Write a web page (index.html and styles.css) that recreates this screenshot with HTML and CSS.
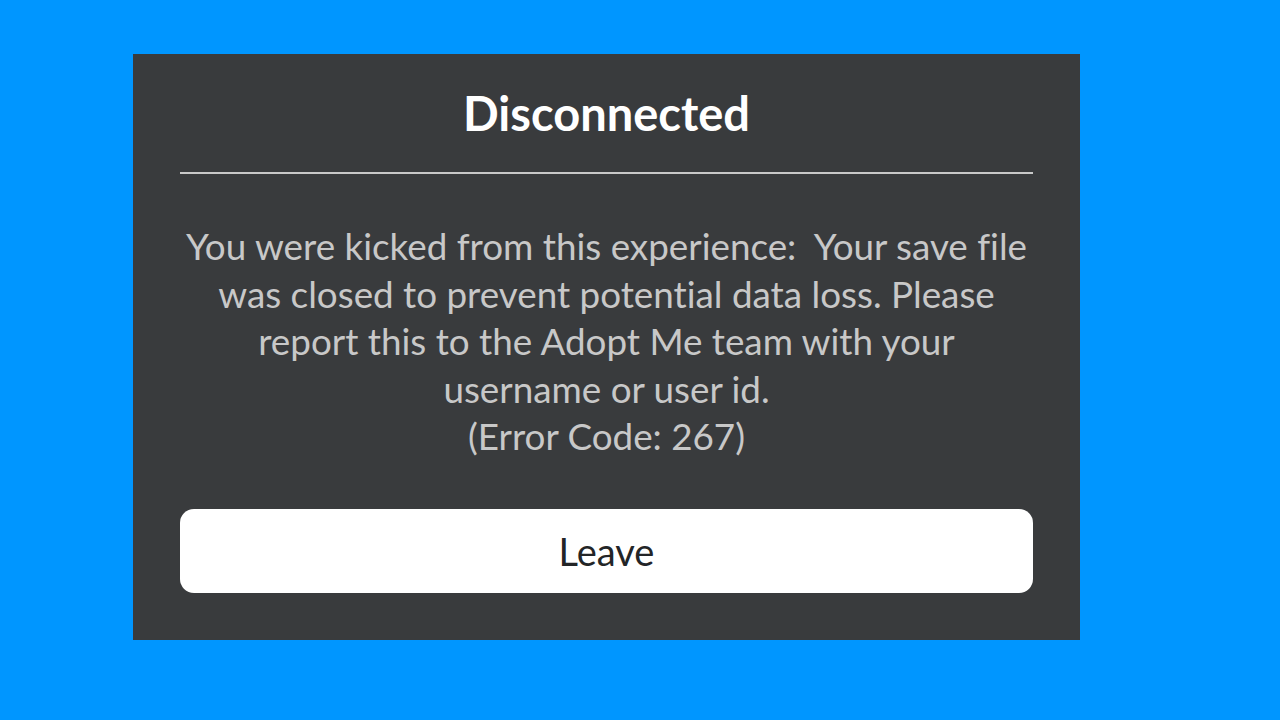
FILE: index.html
```html
<!DOCTYPE html>
<html>
<head>
<meta charset="utf-8">
<link rel="stylesheet" href="styles.css">
</head>
<body>
<div class="dialog">
  <div class="title">Disconnected</div>
  <div class="divider"></div>
  <div class="message">You were kicked from this experience:&nbsp; Your save file<br>was closed to prevent potential data loss. Please<br>report this to the Adopt Me team with your<br>username or user id.<br>(Error Code: 267)</div>
  <button class="leave">Leave</button>
</div>
</body>
</html>
```
FILE: styles.css
```css
html, body {
  margin: 0;
  padding: 0;
}
body {
  background: #0096ff;
  width: 1280px;
  height: 720px;
  overflow: hidden;
  font-family: Lato, "Open Sans", sans-serif;
  font-variant-ligatures: none;
}
.dialog {
  margin: 54px 0 0 133px;
  width: 947px;
  height: 586px;
  box-sizing: border-box;
  padding: 0 47px 47px;
  background: #393b3d;
  display: flex;
  flex-direction: column;
}
.title {
  height: 118px;
  display: flex;
  align-items: center;
  justify-content: center;
  color: #ffffff;
  font-weight: 700;
  font-size: 47px;
}
.divider {
  height: 2px;
  background: #c9c9c9;
}
.message {
  margin-top: 49px;
  text-align: center;
  color: #c8c8c8;
  font-size: 36.8px;
  line-height: 47.5px;
  white-space: nowrap;
}
.leave {
  margin-top: 48px;
  height: 84px;
  border: none;
  border-radius: 14px;
  background: #ffffff;
  color: #232527;
  font-family: Lato, "Open Sans", sans-serif;
  font-variant-ligatures: none;
  font-size: 38px;
  padding: 0;
}
```
